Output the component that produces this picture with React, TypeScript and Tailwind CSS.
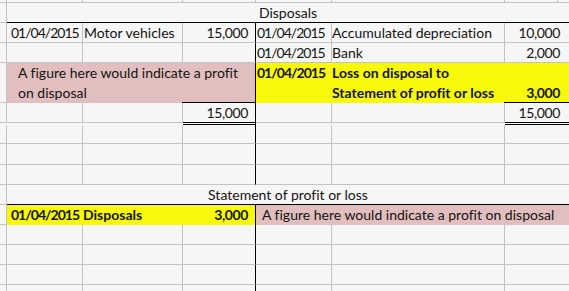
import React from "react";

type RowProps = {
  h: string;
  a?: React.ReactNode;
  b?: React.ReactNode;
  c?: React.ReactNode;
  d?: React.ReactNode;
  e?: React.ReactNode;
  f?: React.ReactNode;
};

function N({ children }: { children: React.ReactNode }) {
  return <span className="tracking-[-1px]">{children}</span>;
}

function M({ children }: { children: React.ReactNode }) {
  return <span className="tracking-[-0.4px]">{children}</span>;
}

function DataRow({ h, a, b, c, d, e, f }: RowProps) {
  return (
    <div className={`flex ${h}`}>
      <div className="w-[7px] shrink-0 border-r border-b border-[#c4c4c4]" />
      <div className="w-[76px] shrink-0 border-r border-b border-[#c4c4c4] pl-[4px] leading-[20px] whitespace-nowrap">{a}</div>
      <div className="w-[100px] shrink-0 border-r border-b border-[#c4c4c4] pl-[1px] leading-[20px] whitespace-nowrap">{b}</div>
      <div className="w-[73px] shrink-0 border-r border-r-black border-b border-b-[#c4c4c4] pr-[7px] text-right leading-[20px]">{c}</div>
      <div className="w-[76px] shrink-0 border-r border-b border-[#c4c4c4] pl-[1px] leading-[20px] whitespace-nowrap">{d}</div>
      <div className="w-[173px] shrink-0 border-r border-b border-[#c4c4c4] pl-0 leading-[20px] whitespace-nowrap">{e}</div>
      <div className="flex-1 border-b border-[#c4c4c4] pr-[9px] text-right leading-[20px]">{f}</div>
    </div>
  );
}

function HeaderRow({ title }: { title: string }) {
  return (
    <div className="flex h-[20px]">
      <div className="w-[7px] shrink-0 border-r border-b border-[#c4c4c4]" />
      <div className="flex-1 border-b border-black text-center leading-[20px] whitespace-nowrap">{title}</div>
    </div>
  );
}

export default function App() {
  return (
    <div className="w-[569px] h-[291px] overflow-hidden bg-[#f6f6f6] text-[#141414] text-[14px] font-['Lato',sans-serif] [font-variant-ligatures:none]">
      {/* top partial row */}
      <div className="flex h-[3px]">
        <div className="w-[7px] shrink-0 border-r border-b border-[#c4c4c4]" />
        <div className="w-[76px] shrink-0 border-r border-b border-[#c4c4c4]" />
        <div className="w-[100px] shrink-0 border-r border-b border-[#c4c4c4]" />
        <div className="w-[73px] shrink-0 border-r border-b border-[#c4c4c4]" />
        <div className="w-[76px] shrink-0 border-r border-b border-[#c4c4c4]" />
        <div className="w-[173px] shrink-0 border-r border-b border-[#c4c4c4]" />
        <div className="w-[53px] shrink-0 border-r border-b border-[#c4c4c4]" />
        <div className="flex-1 border-b border-[#c4c4c4]" />
      </div>

      <HeaderRow title="Disposals" />

      <DataRow
        h="h-[20px]"
        a={<N>01/04/2015</N>}
        b="Motor vehicles"
        c={<M>15,000</M>}
        d={<N>01/04/2015</N>}
        e="Accumulated depreciation"
        f={<M>10,000</M>}
      />
      <DataRow h="h-[20px]" d={<N>01/04/2015</N>} e="Bank" f={<M>2,000</M>} />

      {/* pink / yellow merged rows */}
      <div className="flex h-[40px]">
        <div className="w-[7px] shrink-0 border-r border-b border-[#c4c4c4]" />
        <div className="w-[249px] shrink-0 flex flex-col border-r border-black">
          <div className="h-[39px] bg-[#e2bebe] pl-[11px] whitespace-nowrap">
            <div className="h-[20px] leading-[20px]">A figure here would indicate a profit</div>
            <div className="h-[19px] leading-[20px]">on disposal</div>
          </div>
          <div className="flex h-[1px]">
            <div className="w-[175px] bg-[#e2bebe]" />
            <div className="flex-1 bg-black" />
          </div>
        </div>
        <div className="flex-1 flex flex-col">
          <div className="h-[39px] bg-[#f8f80a] font-bold whitespace-nowrap">
            <div className="flex h-[20px] leading-[20px]">
              <div className="w-[76px] shrink-0 pl-[1px]">
                <N>01/04/2015</N>
              </div>
              <div className="w-[173px] shrink-0 pl-0">Loss on disposal to</div>
              <div className="flex-1" />
            </div>
            <div className="flex h-[19px] leading-[20px]">
              <div className="w-[76px] shrink-0" />
              <div className="w-[173px] shrink-0 pl-0">Statement of profit or loss</div>
              <div className="flex-1 pr-[9px] text-right">
                <M>3,000</M>
              </div>
            </div>
          </div>
          <div className="flex h-[1px]">
            <div className="w-[248px] bg-[#f8f80a]" />
            <div className="flex-1 bg-black" />
          </div>
        </div>
      </div>

      {/* totals row */}
      <div className="flex h-[22px] items-start">
        <div className="w-[7px] h-[20px] shrink-0 border-r border-b border-[#c4c4c4]" />
        <div className="w-[76px] h-[20px] shrink-0 border-r border-b border-[#c4c4c4]" />
        <div className="w-[100px] h-[20px] shrink-0 border-r border-b border-[#c4c4c4]" />
        <div className="w-[73px] h-[22px] shrink-0 border-r border-r-black border-b-[3px] border-double border-b-black pr-[7px] text-right leading-[20px]">
          <M>15,000</M>
        </div>
        <div className="w-[76px] h-[20px] shrink-0 border-r border-b border-[#c4c4c4]" />
        <div className="w-[173px] h-[20px] shrink-0 border-r border-b border-[#c4c4c4]" />
        <div className="flex-1 h-[22px] border-b-[3px] border-double border-black pr-[9px] text-right leading-[20px]">
          <M>15,000</M>
        </div>
      </div>

      <DataRow h="h-[19px]" />
      <DataRow h="h-[21px]" />
      <DataRow h="h-[20px]" />

      <HeaderRow title="Statement of profit or loss" />

      {/* statement row */}
      <div className="flex h-[20px] whitespace-nowrap">
        <div className="w-[7px] shrink-0 border-r border-b border-[#c4c4c4]" />
        <div className="w-[249px] shrink-0 flex border-r border-black bg-[#f8f80a] font-bold leading-[20px]">
          <div className="w-[76px] shrink-0 pl-[4px]">
            <N>01/04/2015</N>
          </div>
          <div className="w-[100px] shrink-0 pl-0">Disposals</div>
          <div className="flex-1 pr-[7px] text-right">
            <M>3,000</M>
          </div>
        </div>
        <div className="flex-1 bg-[#e2bebe] pl-[6px] leading-[20px]">A figure here would indicate a profit on disposal</div>
      </div>

      <DataRow h="h-[20px]" />
      <DataRow h="h-[20px]" />
      <DataRow h="h-[20px]" />
      <DataRow h="h-[20px]" />
    </div>
  );
}
